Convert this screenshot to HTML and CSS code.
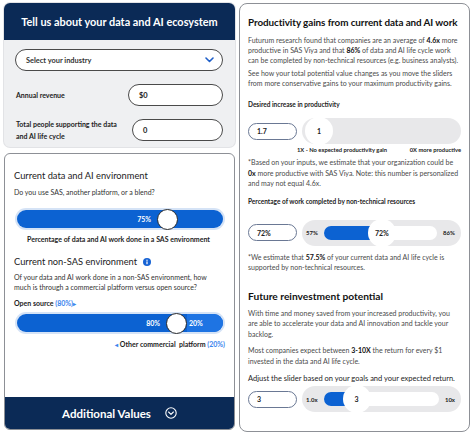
FILE: index.html
```html
<!DOCTYPE html>
<html lang="en">
<head>
<meta charset="utf-8">
<title>SAS Viya value calculator</title>
<link rel="stylesheet" href="styles.css">
</head>
<body>
<div class="page">
  <div class="left">
    <section class="card-eco">
      <header class="eco-head">Tell us about your data and AI ecosystem</header>
      <div class="eco-body">
        <div class="select">
          <span>Select your industry</span>
          <svg class="chev" width="9" height="6" viewBox="0 0 9 6"><path d="M1 1l3.5 3.5L8 1" fill="none" stroke="#1f5fc9" stroke-width="1.6" stroke-linecap="round" stroke-linejoin="round"/></svg>
        </div>
        <div class="field-row first">
          <span class="field-label">Annual revenue</span>
          <div class="input input-rev">$0</div>
        </div>
        <div class="field-row">
          <span class="field-label two">Total people supporting the data and AI life cycle</span>
          <div class="input input-ppl">0</div>
        </div>
      </div>
    </section>

    <section class="card-env">
      <div class="env-body">
        <h2 class="env-title">Current data and AI environment</h2>
        <p class="env-q">Do you use SAS, another platform, or a blend?</p>
        <div class="bar bar-sas">
          <span class="bar-left" style="width:140px">75%</span>
          <span class="knob"></span>
        </div>
        <p class="bar-caption">Percentage of data and AI work done in a SAS environment</p>

        <h2 class="env-title second">Current non-SAS environment
          <svg class="info" width="8" height="8" viewBox="0 0 8 8"><circle cx="4" cy="4" r="4" fill="#1763d4"/><rect x="3.4" y="3.4" width="1.2" height="2.8" fill="#fff"/><circle cx="4" cy="2.2" r="0.7" fill="#fff"/></svg>
        </h2>
        <p class="env-q para">Of your data and AI work done in a non-SAS environment, how much is through a commercial platform versus open source?</p>
        <p class="split-label">Open source <span class="blue">(80%)</span><span class="tri-r">&#9656;</span></p>
        <div class="bar bar-split">
          <span class="bar-left" style="width:149px">80%</span>
          <span class="knob"></span>
          <span class="bar-right">20%</span>
        </div>
        <p class="split-caption"><span class="tri-l">&#9666;</span> Other commercial&nbsp; platform <span class="blue">(20%)</span></p>
      </div>
      <footer class="env-foot">
        <span>Additional Values</span>
        <svg width="12" height="12" viewBox="0 0 12 12"><circle cx="6" cy="6" r="5.2" fill="none" stroke="#fff" stroke-width="1.1"/><path d="M3.6 5l2.4 2.4L8.4 5" fill="none" stroke="#fff" stroke-width="1.1" stroke-linecap="round" stroke-linejoin="round"/></svg>
      </footer>
    </section>
  </div>

  <section class="card-prod">
    <h1 class="prod-title">Productivity gains from current data and AI work</h1>
    <p class="prod-p p1">Futurum research found that companies are an average of <b>4.6x</b> more productive in SAS Viya and that <b>86%</b> of data and AI life cycle work can be completed by non-technical resources (e.g. business analysts).</p>
    <p class="prod-p p2">See how your total potential value changes as you move the sliders from more conservative gains to your maximum productivity gains.</p>
    <p class="prod-label l1">Desired increase in productivity</p>
    <div class="slider-row r1">
      <div class="r-input">1.7</div>
      <div class="r-track">
        <span class="r-knob k1">1</span>
      </div>
    </div>
    <div class="scale">
      <span>1X - No expected productivity gain</span>
      <span>0X more productive</span>
    </div>
    <p class="prod-p p3">*Based on your inputs, we estimate that your organization could be <b>0x</b> more productive with SAS Viya. Note: this number is personalized and may not equal 4.6x.</p>
    <p class="prod-label l2">Percentage of work completed by non-technical resources</p>
    <div class="slider-row r2">
      <div class="r-input">72%</div>
      <div class="r-track">
        <span class="r-end">57%</span>
        <div class="r-inner">
          <span class="r-fill" style="width:58px"></span>
          <span class="r-knob k2">72%</span>
        </div>
        <span class="r-end">86%</span>
      </div>
    </div>
    <p class="prod-p p4">*We estimate that <b>57.5%</b> of your current data and AI life cycle is supported by non-technical resources.</p>
    <h2 class="prod-title sub">Future reinvestment potential</h2>
    <p class="prod-p p5">With time and money saved from your increased productivity, you are able to accelerate your data and AI innovation and tackle your backlog.</p>
    <p class="prod-p p6">Most companies expect between <b>3-10X</b> the return for every $1 invested in the data and AI life cycle.</p>
    <p class="prod-adjust">Adjust the slider based on your goals and your expected return.</p>
    <div class="slider-row r3">
      <div class="r-input">3</div>
      <div class="r-track">
        <span class="r-end">1.0x</span>
        <div class="r-inner">
          <span class="r-fill" style="width:33px"></span>
          <span class="r-knob k2">3</span>
        </div>
        <span class="r-end">10x</span>
      </div>
    </div>
  </section>
</div>
</body>
</html>
```

FILE: styles.css
```css
* { box-sizing: border-box; }
html, body { margin: 0; padding: 0; }
body {
  width: 474px;
  height: 435px;
  overflow: hidden;
  background: #fff;
  font-family: Lato, "Open Sans", Arial, sans-serif;
  color: #222;
}
p, h1, h2 { margin: 0; }

.page {
  display: flex;
  gap: 4px;
  padding: 3px 4px 0 4px;
}

/* ---------- left column ---------- */
.left {
  width: 231px;
  display: flex;
  flex-direction: column;
  gap: 6px;
}

.card-eco {
  height: 144px;
  border-radius: 6px;
  overflow: hidden;
  background: #eff0f2;
  box-shadow: 0 0 0 1px #e2e3e6;
}
.eco-head {
  height: 37px;
  background: #0b2a56;
  color: #fff;
  font-weight: 700;
  font-size: 10.9px;
  display: flex;
  align-items: center;
  justify-content: center;
}
.eco-body { padding: 9px 12px 0 11px; }

.select {
  height: 22px;
  border: 1px solid #4a4a4a;
  border-radius: 11px;
  background: #fff;
  display: flex;
  align-items: center;
  justify-content: space-between;
  padding: 0 8px 0 10px;
  font-size: 7.4px;
  font-weight: 700;
  color: #333;
}
.field-row {
  display: flex;
  align-items: center;
  justify-content: space-between;
  margin-top: 12px;
}
.field-row.first { margin-top: 13px; }
.field-label {
  font-size: 7px;
  font-weight: 700;
  color: #1d1d1d;
  padding-left: 1px;
}
.field-label.two { width: 112px; line-height: 12px; }
.input {
  height: 22px;
  border: 1px solid #4a4a4a;
  border-radius: 11px;
  background: #fff;
  display: flex;
  align-items: center;
  padding-left: 10px;
  font-size: 7.5px;
  font-weight: 700;
  color: #222;
}
.input-rev { width: 95px; }
.input-ppl { width: 91px; }

.card-env {
  height: 277px;
  border: 1px solid #8d9096;
  border-radius: 6px;
  overflow: hidden;
  display: flex;
  flex-direction: column;
}
.env-body { flex: 1; padding: 16px 11px 0 9px; }
.env-title {
  font-size: 9.3px;
  font-weight: 400;
  line-height: 12px;
  color: #222;
  display: flex;
  align-items: center;
  gap: 6px;
}
.env-title.second { margin-top: 12px; }
.env-q {
  font-size: 7px;
  line-height: 10px;
  color: #333;
  margin-top: 5px;
}
.env-q.para { margin-top: 5px; line-height: 9.5px; }

.bar {
  height: 18px;
  margin: 13px 0 0 3px;
  border-radius: 9px;
  background: #0c62d2;
  box-shadow: 0 0 0 2px #d5e3f6;
  display: flex;
  align-items: center;
  color: #fff;
  font-size: 7px;
  font-weight: 700;
}
.bar-left {
  flex: none;
  text-align: right;
  padding-right: 6px;
}
.knob {
  flex: none;
  width: 21px;
  height: 21px;
  border-radius: 50%;
  background: #fff;
  border: 1.2px solid #2b2b2b;
}
.bar-right {
  flex: 1;
  align-self: stretch;
  display: flex;
  align-items: center;
  padding-left: 2px;
  background: #1e74e3;
  border-radius: 0 9px 9px 0;
}
.bar-caption {
  margin-top: 6px;
  text-align: center;
  font-size: 7px;
  font-weight: 700;
  line-height: 10px;
  color: #1d1d1d;
}
.split-label {
  margin-top: 6px;
  font-size: 7px;
  font-weight: 700;
  line-height: 10px;
  color: #1d1d1d;
}
.blue { color: #3a84ee; }
.tri-r, .tri-l { color: #3a84ee; font-size: 6px; }
.bar-split { margin-top: 5px; }
.split-caption {
  margin-top: 7px;
  text-align: right;
  font-size: 7px;
  font-weight: 700;
  line-height: 10px;
  color: #1d1d1d;
  margin-right: -2px;
}
.env-foot {
  height: 32px;
  flex: none;
  background: #0b2a56;
  color: #fff;
  font-weight: 700;
  font-size: 11.5px;
  display: flex;
  align-items: center;
  justify-content: center;
  gap: 14px;
}

/* ---------- right card ---------- */
.card-prod {
  width: 231px;
  height: 429px;
  border: 1px solid #8d9096;
  border-radius: 8px;
  padding: 12px 8px 0 8px;
}
.prod-title {
  font-size: 9.9px;
  letter-spacing: -0.08px;
  font-weight: 700;
  line-height: 13px;
  color: #111;
  white-space: nowrap;
}
.prod-title.sub { margin-top: 17px; font-size: 10.2px; letter-spacing: 0; }
.prod-p {
  font-size: 7px;
  line-height: 10px;
  color: #4a4a4a;
}
.prod-p b { color: #111; font-weight: 700; }
.p1 { margin-top: 6px; }
.p2 { margin-top: 3px; }
.p3 { margin-top: 3px; line-height: 10.5px; }
.p4 { margin-top: 6px; line-height: 10.5px; }
.p5 { margin-top: 5px; line-height: 10.5px; }
.p6 { margin-top: 6px; line-height: 10.5px; }
.prod-label {
  font-size: 6.5px;
  font-weight: 700;
  line-height: 10px;
  color: #1d1d1d;
}
.l1 { margin-top: 12px; }
.l2 { margin-top: 8px; }
.prod-adjust {
  margin-top: 8px;
  font-size: 7.5px;
  line-height: 10px;
  color: #1d1d1d;
}

.slider-row {
  display: flex;
  align-items: center;
  gap: 5px;
}
.r1 { margin-top: 8px; }
.r2 { margin-top: 13px; }
.r3 { margin-top: 2px; }
.r-input {
  width: 49px;
  height: 17px;
  flex: none;
  border: 1px solid #6a7894;
  border-radius: 9px;
  background: #fff;
  display: flex;
  align-items: center;
  padding-left: 8px;
  font-size: 7px;
  font-weight: 700;
  color: #222;
}
.r-track {
  flex: 1;
  height: 26px;
  border-radius: 13px;
  background: #e8e8ea;
  display: flex;
  align-items: center;
  padding: 0 6px 0 4px;
  gap: 6px;
  font-size: 6px;
  font-weight: 700;
  color: #222;
}
.r-knob {
  flex: none;
  width: 28px;
  height: 28px;
  border-radius: 50%;
  background: #fff;
  display: flex;
  align-items: center;
  justify-content: center;
  font-size: 7px;
  font-weight: 700;
  color: #222;
}
.k1 { margin-left: -1px; }
.r-end { flex: none; }
.r-inner {
  flex: 1;
  height: 14px;
  border-radius: 7px;
  background: #fff;
  display: flex;
  align-items: center;
}
.r-fill {
  flex: none;
  height: 14px;
  background: #0c62d2;
  border-radius: 7px 0 0 7px;
}
.k2 { margin-left: -14px; }

.scale {
  display: flex;
  justify-content: space-between;
  margin-top: 2px;
  padding-left: 49px;
  font-size: 5.8px;
  font-weight: 700;
  line-height: 8px;
  color: #222;
}
```
